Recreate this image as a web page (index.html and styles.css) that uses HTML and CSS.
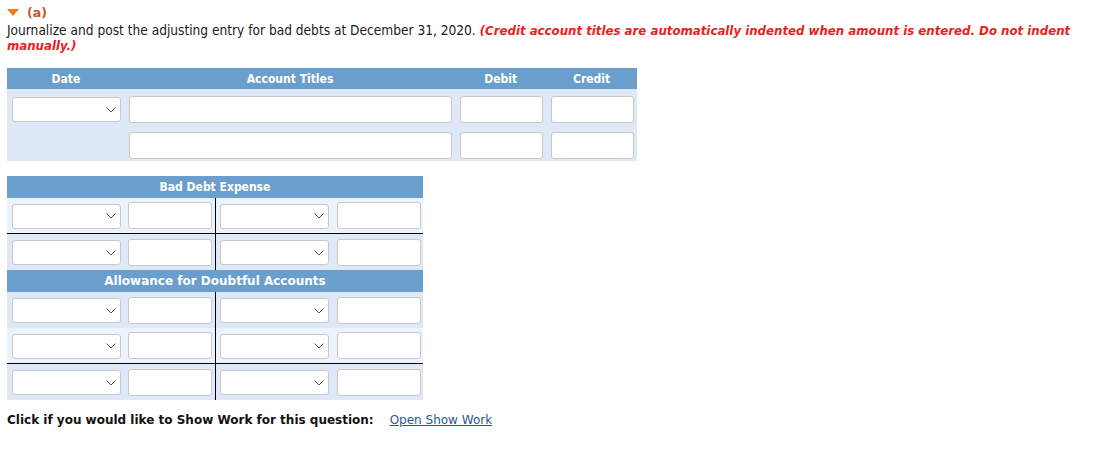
FILE: index.html
```html
<!DOCTYPE html>
<html>
<head>
<meta charset="utf-8">
<link rel="stylesheet" href="styles.css">
</head>
<body>
<div class="page">
  <div class="part-title">
    <svg class="tri" width="12" height="8" viewBox="0 0 12 8"><polygon points="0,0 12,0 6,7" fill="#f47a20"/></svg>
    <span class="part-label">(a)</span>
  </div>
  <p class="instructions">Journalize and post the adjusting entry for bad debts at December 31, 2020. <em class="note">(Credit account titles are automatically indented when amount is entered. Do not indent</em><br><em class="note">manually.)</em></p>

  <div class="journal">
    <div class="jrow jhead">
      <div class="c-date">Date</div>
      <div class="c-acct">Account Titles</div>
      <div class="c-amt">Debit</div>
      <div class="c-amt">Credit</div>
    </div>
    <div class="jrow jbody">
      <div class="c-date"><div class="sel"><svg width="10" height="6" viewBox="0 0 10 6"><polyline points="0.5,0.5 5,5 9.5,0.5" fill="none" stroke="#555" stroke-width="1"/></svg></div></div>
      <div class="c-acct"><div class="inp"></div></div>
      <div class="c-amt"><div class="inp"></div></div>
      <div class="c-amt"><div class="inp"></div></div>
    </div>
    <div class="jrow jbody">
      <div class="c-date"></div>
      <div class="c-acct"><div class="inp"></div></div>
      <div class="c-amt"><div class="inp"></div></div>
      <div class="c-amt"><div class="inp"></div></div>
    </div>
  </div>

  <div class="taccount">
    <div class="thead thead-sm">Bad Debt Expense</div>
    <div class="trow light lined">
      <div class="half left"><div class="sel"><svg width="10" height="6" viewBox="0 0 10 6"><polyline points="0.5,0.5 5,5 9.5,0.5" fill="none" stroke="#555" stroke-width="1"/></svg></div><div class="inp amt"></div></div>
      <div class="half right"><div class="sel"><svg width="10" height="6" viewBox="0 0 10 6"><polyline points="0.5,0.5 5,5 9.5,0.5" fill="none" stroke="#555" stroke-width="1"/></svg></div><div class="inp amt"></div></div>
    </div>
    <div class="trow dark">
      <div class="half left"><div class="sel"><svg width="10" height="6" viewBox="0 0 10 6"><polyline points="0.5,0.5 5,5 9.5,0.5" fill="none" stroke="#555" stroke-width="1"/></svg></div><div class="inp amt"></div></div>
      <div class="half right"><div class="sel"><svg width="10" height="6" viewBox="0 0 10 6"><polyline points="0.5,0.5 5,5 9.5,0.5" fill="none" stroke="#555" stroke-width="1"/></svg></div><div class="inp amt"></div></div>
    </div>
    <div class="thead">Allowance for Doubtful Accounts</div>
    <div class="trow dark">
      <div class="half left"><div class="sel"><svg width="10" height="6" viewBox="0 0 10 6"><polyline points="0.5,0.5 5,5 9.5,0.5" fill="none" stroke="#555" stroke-width="1"/></svg></div><div class="inp amt"></div></div>
      <div class="half right"><div class="sel"><svg width="10" height="6" viewBox="0 0 10 6"><polyline points="0.5,0.5 5,5 9.5,0.5" fill="none" stroke="#555" stroke-width="1"/></svg></div><div class="inp amt"></div></div>
    </div>
    <div class="trow light lined">
      <div class="half left"><div class="sel"><svg width="10" height="6" viewBox="0 0 10 6"><polyline points="0.5,0.5 5,5 9.5,0.5" fill="none" stroke="#555" stroke-width="1"/></svg></div><div class="inp amt"></div></div>
      <div class="half right"><div class="sel"><svg width="10" height="6" viewBox="0 0 10 6"><polyline points="0.5,0.5 5,5 9.5,0.5" fill="none" stroke="#555" stroke-width="1"/></svg></div><div class="inp amt"></div></div>
    </div>
    <div class="trow dark">
      <div class="half left"><div class="sel"><svg width="10" height="6" viewBox="0 0 10 6"><polyline points="0.5,0.5 5,5 9.5,0.5" fill="none" stroke="#555" stroke-width="1"/></svg></div><div class="inp amt"></div></div>
      <div class="half right"><div class="sel"><svg width="10" height="6" viewBox="0 0 10 6"><polyline points="0.5,0.5 5,5 9.5,0.5" fill="none" stroke="#555" stroke-width="1"/></svg></div><div class="inp amt"></div></div>
    </div>
  </div>

  <p class="showwork"><strong>Click if you would like to Show Work for this question:</strong><a class="link" href="#">Open Show Work</a></p>
</div>
</body>
</html>
```
FILE: styles.css
```css
html, body {
  margin: 0;
  padding: 0;
  background: #fff;
}
.page {
  padding: 4px 0 0 7px;
  font-family: "DejaVu Sans Condensed", "DejaVu Sans", sans-serif;
  font-size: 13px;
  color: #1a1a1a;
}
.part-title {
  display: flex;
  align-items: center;
  height: 16px;
}
.tri {
  margin-right: 8px;
  margin-top: 1px;
}
.part-label {
  font-family: "DejaVu Sans", sans-serif;
  font-weight: bold;
  font-size: 12.5px;
  color: #c8561c;
}
.instructions {
  margin: 3px 0 0 0;
  font-size: 13.6px;
  line-height: 15px;
  width: 1095px;
}
.note {
  color: #ee1c1c;
  font-weight: bold;
  font-style: italic;
  font-size: 13.1px;
  line-height: 15px;
}

/* Journal */
.journal {
  margin-top: 15px;
  width: 630px;
  background: #dee8f7;
}
.jrow {
  display: flex;
  padding: 0 3px 0 5px;
  gap: 8px;
}
.jhead {
  height: 21px;
  background: #6a9fcd;
  color: #fff;
  font-weight: bold;
  font-size: 12px;
  align-items: center;
  padding: 0;
  gap: 0;
}
.jhead .c-date { width: 118px; }
.jhead .c-acct { width: 331px; }
.jhead .c-amt { width: 91px; }
.jhead > div { text-align: center; }
.jbody {
  height: 36px;
  align-items: flex-start;
  padding-top: 7px;
  box-sizing: border-box;
}
.jbody .c-date { width: 109px; }
.jbody .c-acct { width: 323px; }
.jbody .c-amt { width: 83px; }

.inp {
  height: 27px;
  background: #fff;
  border: 1px solid #c9c9c9;
  border-radius: 3px;
  box-sizing: border-box;
}
.sel {
  height: 25px;
  margin-top: 1px;
  width: 109px;
  background: #fff;
  border: 1px solid #c9c9c9;
  border-radius: 3px;
  box-sizing: border-box;
  display: flex;
  align-items: center;
  justify-content: flex-end;
  padding-right: 4px;
  flex: none;
}

/* T accounts */
.taccount {
  margin-top: 15px;
  width: 416px;
}
.thead {
  height: 22px;
  background: #6a9fcd;
  color: #fff;
  font-family: "DejaVu Sans", sans-serif;
  font-weight: bold;
  font-size: 12px;
  display: flex;
  align-items: center;
  justify-content: center;
}
.thead-sm {
  font-family: "DejaVu Sans Condensed", "DejaVu Sans", sans-serif;
}
.trow {
  display: flex;
  height: 36px;
  box-sizing: border-box;
}
.trow.lined {
  border-bottom: 1px solid #000;
}
.trow.light { background: #edf3fc; }
.trow.dark { background: #dee8f7; }
.half {
  display: flex;
  align-items: center;
  box-sizing: border-box;
}
.half.left {
  width: 209px;
  padding-left: 5px;
  gap: 7px;
  border-right: 1px solid #000;
}
.half.right {
  width: 207px;
  padding-left: 4px;
  gap: 8px;
}
.inp.amt {
  width: 84px;
}

.showwork {
  margin: 13px 0 0 0;
  font-family: "DejaVu Sans", sans-serif;
  font-size: 12px;
  color: #111;
}
.showwork strong {
  font-size: 12px;
}
.link {
  margin-left: 16px;
  color: #1f5a94;
  text-decoration: underline;
  font-size: 12px;
}
```
